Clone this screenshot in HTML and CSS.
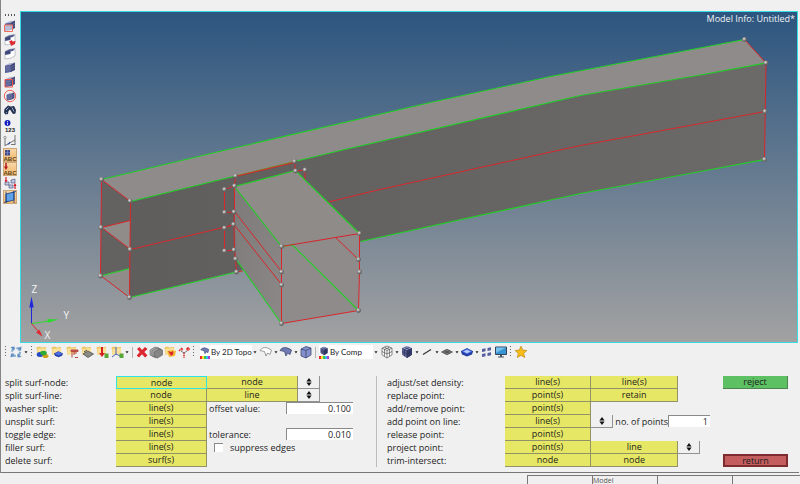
FILE: index.html
```html
<!DOCTYPE html>
<html lang="en">
<head>
<meta charset="utf-8">
<title>Model</title>
<link rel="stylesheet" href="styles.css">
</head>
<body>
<svg class="defs" aria-hidden="true">
  <symbol id="caret" viewBox="0 0 6 14"><path d="M1.5 6.2h3L3 8.4z" fill="#222"/></symbol>
  <symbol id="updown" viewBox="0 0 8 10"><path d="M1.4 4.4 4 1l2.6 3.400zM1.400 5.600h5.200L4 9z" fill="#111"/></symbol>
  <symbol id="solid" viewBox="0 0 14 14">
    <path d="M2 4.500 8 3.500v7.500l-6 1z" fill="#50588e"/><path d="M2 4.500 6 2.500l6-1-4 2z" fill="#a5abcf"/><path d="m8 3.500 4-2V9l-4 2z" fill="#3f4777"/>
    <path d="M4 4.200v7.500M6 3.900v7.400M2 7l6-1 4-2M2 9.500l6-1 4-2" stroke="#8088b8" stroke-width=".5" fill="none"/>
  </symbol>
  <symbol id="halfsolid" viewBox="0 0 14 14">
    <path d="M2 4.500 6 2.500l6-1V9l-4 2-6 1z" fill="#fff" stroke="#9b9da9" stroke-width=".6"/>
    <path d="M2 4.500 6 2.500l6-1-2 2.500-2.500.500V7L2 8z" fill="#555e91"/><path d="M4 4v3.500M6 3.300v3.500M2 6.200l5.500-1" stroke="#252b54" stroke-width=".5"/>
  </symbol>
  <symbol id="folder" viewBox="0 0 14 14"><path d="M1.500 2.200 5 1.400l1.200 1 4.800-.4v6.500l-8.500 1.300z" fill="#efc65d"/><path d="m2.500 3.800 9-.8-.8 5.700-8.200 1z" fill="#fbe19a"/></symbol>
  <symbol id="cube" viewBox="0 0 14 14">
    <path d="m7 1 5 2.200v6.600L7 13 2 9.800V3.200z" fill="#5c6393"/><path d="m7 1 5 2.200-5 2.300-5-2.300z" fill="#9ca4d2"/><path d="M7 5.500 12 3.200v6.600L7 13z" fill="#363c69"/>
    <path d="m2 3.200 5 2.300 5-2.300M7 5.500V13M2 6.500 7 9l5-2.500M4.500 4.300v7M9.500 4.300v7M4.500 2.200l5 2.200M9.500 2.200l-5 2.200" fill="none" stroke="#252b55" stroke-width=".6"/>
  </symbol>
  <symbol id="surface" viewBox="0 0 14 14"><path d="M1 5.500C3 2 7 1.500 12.500 5L11 9.500 8.500 8 7 11 5.500 6.500z" fill="#707bb5" stroke="#343b65" stroke-width=".7"/></symbol>
  <symbol id="slab" viewBox="0 0 14 14"><path d="m1 6.500 6-3 6 3-1 3-5 2-5-2z" fill="#2440a8"/><path d="m1 6.500 6-3 6 3-6 3z" fill="#4d74ec" stroke="#1d3187" stroke-width=".6"/></symbol>
  <symbol id="spectrum" viewBox="0 0 10 3"><path fill="#e8262c" d="M0 0h2v3H0z"/><path fill="#f4e534" d="M2 0h2v3H2z"/><path fill="#38c452" d="M4 0h2v3H4z"/><path fill="#30bff0" d="M6 0h2v3H6z"/><path fill="#a63fd9" d="M8 0h2v3H8z"/></symbol>
</svg>

<main class="app">
  <section class="workspace">
    <nav class="rail" aria-label="Display">
      <span class="rail-grip"></span>
      <button class="tool" aria-label="Mask"><svg viewBox="0 0 14 14"><use href="#solid"/><path d="M1.500 6h8v6.500h-8z" fill="#fff" fill-opacity=".55" stroke="#f06b5c"/></svg></button>
      <button class="tool" aria-label="Reverse"><svg viewBox="0 0 14 14"><use href="#halfsolid"/><path d="M6 8.500 9 7l.5 1.500 3-.5-.5 3-4 2-.5-2z" fill="#dc2b35"/></svg></button>
      <button class="tool" aria-label="Adjacent"><svg><use href="#halfsolid"/></svg></button>
      <button class="tool" aria-label="All"><svg><use href="#solid"/></svg></button>
      <button class="tool" aria-label="Window"><svg viewBox="0 0 14 14"><use href="#solid"/><path d="M2 4.500h7.500V12H2z" fill="none" stroke="#ef5149"/></svg></button>
      <button class="tool" aria-label="Sphere"><svg viewBox="0 0 14 14"><use href="#solid" x="2" y="2" width="11" height="11"/><circle cx="7" cy="7" r="5.700" fill="none" stroke="#ef6258"/></svg></button>
      <button class="tool" aria-label="Find"><svg viewBox="0 0 14 14"><path d="M1.500 6 5 2.500l2.500 1L11 3l2 4-.5 3.500-2.500.5-2-3-1-1.500L5.500 8 5 11l-2.500.5-1.500-2z" fill="#24304f"/><path d="m3 7 2.500-2.500M9 4.500l2 4M3 9.500l1 .5" stroke="#9fb0d4"/></svg></button>
      <button class="tool numbers" aria-label="Numbers"><svg viewBox="0 0 14 9"><circle cx="4.500" cy="5" r="3" fill="#1720bd"/><path d="M4.500 3v1M4.500 4.700v2.300" stroke="#fff" stroke-width=".8"/></svg><span>123</span></button>
      <button class="tool" aria-label="Vector"><svg viewBox="0 0 14 14"><path d="M2 5v7M12 1v10M2 11.500 12 6M8 10.500h4" stroke="#555" stroke-width=".8"/><path d="m4 11 3-3.500V10z" fill="#3b54a5"/><circle cx="2" cy="3.500" r="1.200" fill="none" stroke="#666" stroke-width=".6"/></svg></button>
      <button class="tool active abc" aria-label="Element handles"><svg viewBox="0 0 14 7"><path d="M2 1h5v5.500H2z" fill="#3d478a"/><path d="M4.500 1v6M2 3.700h5" stroke="#8e9bd0" stroke-width=".6"/></svg><span>ABC</span></button>
      <button class="tool active abc" aria-label="Load handles"><svg viewBox="0 0 14 7"><path d="M3 0v4" stroke="#b61620" stroke-width="1.500"/><path d="M1 3.500h4L3 7z" fill="#b61620"/></svg><span>ABC</span></button>
      <button class="tool" aria-label="Connectors"><svg viewBox="0 0 14 14"><path d="M2 6h4v3H2zM8 4l4-1v4H8zM6 9h4v3H6z" fill="#c3c8df" stroke="#505987" stroke-width=".7"/><path d="M3 1v5M12 8v5" stroke="#d4202e" stroke-width="1.200"/><path d="M1.500 4h3L3 6.500zM10.500 10h3L12 7z" fill="#d4202e"/></svg></button>
      <button class="tool active" aria-label="Shaded"><svg viewBox="0 0 14 14"><path d="m3 4 8-2v8l-8 2z" fill="#5fa2ea" stroke="#163e83" stroke-width=".8"/><path d="M3 1.500V13M11 1v12M1 12.500l4-1.300M9 2.500l4-1" stroke="#163e83" stroke-width=".8"/></svg></button>
    </nav>
    <div class="viewport">
      <svg class="model" viewBox="20.5 11.5 776 330" role="img" aria-label="Beam model">
        <defs>
          <linearGradient id="side" x1="0" x2="1"><stop offset="0" stop-color="#605e5d"/><stop offset="1" stop-color="#6c6a68"/></linearGradient>
          <linearGradient id="left" x1="0" x2="1" y2="1"><stop offset="0" stop-color="#7d7b79"/><stop offset="1" stop-color="#8b8887"/></linearGradient>
          <radialGradient id="ball" cx=".4" cy=".35"><stop offset="0" stop-color="#eee"/><stop offset=".4" stop-color="#adabaa"/><stop offset="1" stop-color="#626160"/></radialGradient>
          <circle id="n" r="2.400" fill="url(#ball)"/>
        </defs>
        <path d="m101 179 29 22v96l-30-22z" fill="#646261"/>
        <path d="m101 227 29-7v29zM100 275l29-7v29z" fill="#8f8c8a"/>
        <path d="M101 179 223 150 430 102 550 76 744 39 765.500 62.500 700 74.500 580 95 340 150 130 201z" fill="#8f8b8a"/>
        <path d="M130 201 340 150 580 95 700 74.500 765.500 62.500 764 159 700 171 580 193 360 241 129 297z" fill="url(#side)"/>
        <g fill="none" stroke="#22cf26" stroke-width="1.100">
          <path d="M101 179 223 150 430 102 550 76 744 39M130 201 235 175.500M294 161 340 150 580 95 700 74.500 765.500 62.500M129 297 236 271.500M360 241 580 193 700 171 764 159M100 275.500l29-7.500"/>
        </g>
        <path d="M235 175.500 294 161" stroke="#7c8b20" stroke-width="1.100"/>
        <g fill="none" stroke="#d9262a">
          <path d="m101 179 29 22-1 96-29-22zM130 220l-29 7 29 22 95-22.500 9-2.500M328 201.500 375 190l205-45 120-22 64.500-12M744 39l21.500 23.500L764 159M235 176l59-14M235 175.500l-1 10M294 161l1 9.500 9.500-1V180"/>
          <path d="M234 185.500 224 189v23l10-.5M233 224l-9 3.500v23l9.500-1M236 271.500l6-1"/>
        </g>
        <path d="m234 186 47 60v77l-46-65z" fill="url(#left)"/>
        <path d="m234 186 61-16 64 63-78 13z" fill="#8e8b89"/>
        <path d="m281 246 78-13-1 77-77 13z" fill="#8e8b8a"/>
        <path d="m234 186 61-16 64 63M234 186l47 60M235 258l46 65M281 246l11-1.500 66 65.500" fill="none" stroke="#22cf26" stroke-width="1.100"/>
        <path d="m281 246 78-13v38l-1 39-77 13zM234 186v25l47 60M234 211l-.5 13 47.500 60M233.500 224l.5 25 1 9 1 13.500M335 237l23 22" fill="none" stroke="#d9262a"/>
        <g>
          <use href="#n" x="101" y="179"/><use href="#n" x="129.500" y="200.500"/><use href="#n" x="100.500" y="227"/><use href="#n" x="129.500" y="249"/><use href="#n" x="100" y="275.500"/><use href="#n" x="129" y="297"/>
          <use href="#n" x="744" y="39"/><use href="#n" x="765.500" y="62.500"/><use href="#n" x="764.500" y="111"/><use href="#n" x="764" y="159"/>
          <use href="#n" x="235" y="175.500"/><use href="#n" x="294" y="161"/><use href="#n" x="234" y="185.500"/><use href="#n" x="295" y="170.500"/><use href="#n" x="304.500" y="169.500"/>
          <use href="#n" x="224" y="189"/><use href="#n" x="224" y="212"/><use href="#n" x="224" y="227.500"/><use href="#n" x="224" y="250.500"/>
          <use href="#n" x="233.500" y="211.500"/><use href="#n" x="233" y="224"/><use href="#n" x="233.500" y="249.500"/><use href="#n" x="235" y="258.500"/><use href="#n" x="236" y="271.500"/>
          <use href="#n" x="281" y="246"/><use href="#n" x="281" y="271.500"/><use href="#n" x="281" y="284.500"/><use href="#n" x="281" y="323"/><use href="#n" x="359" y="233"/><use href="#n" x="358" y="259"/><use href="#n" x="359" y="271.500"/><use href="#n" x="358" y="310"/>
        </g>
        <path d="M31 323v-17" stroke="#2028d8"/><path d="m31 296 2.200 11h-4.400z" fill="#2028d8"/>
        <path d="m31 323 18-2.500" stroke="#2bdc2b"/><path d="m58 319-10.500 3.300-.7-3.800z" fill="#2bdc2b"/>
        <path d="m31 323 6 7" stroke="#e2262a"/><path d="m42 336-6.300-4 3-3z" fill="#e2262a"/>
        <g class="axis"><text x="31" y="292">Z</text><text x="63" y="318">Y</text><text x="44" y="338">X</text></g>
      </svg>
      <p class="model-info">Model Info: Untitled*</p>
    </div>
  </section>

  <div class="toolbar">
    <span class="grip"></span>
    <button class="tool" aria-label="Update"><svg viewBox="0 0 14 14"><circle cx="7" cy="7" r="4" fill="none" stroke="#86add3" stroke-width="2" stroke-dasharray="4.800 1.480"/><path d="m1.500 2 4-.5L5 5.500zM12.500 12l-4 .5L9 8.500zM12.500 1.500l-.5 4-3.500-2.500zM1.500 12.500 2 8.500l3.500 2.500z" fill="#5d8cbd"/></svg></button>
    <button class="drop" aria-label="More"><svg><use href="#caret"/></svg></button>
    <span class="grip"></span>
    <div class="group">
      <button class="tool" aria-label="Assembly"><svg viewBox="0 0 14 14"><use href="#folder"/><ellipse cx="5" cy="9.500" rx="3.300" ry="2.500" fill="#2748c6"/><ellipse cx="10.500" cy="11" rx="3" ry="2" fill="#d2a11b"/><ellipse cx="8.500" cy="8" rx="3.300" ry="2.300" fill="#2eaa36"/></svg></button>
      <button class="tool" aria-label="Component"><svg viewBox="0 0 14 14"><use href="#folder"/><use href="#slab" x="3" y="4" width="11" height="10"/></svg></button>
      <button class="tool" aria-label="Property"><svg viewBox="0 0 14 14"><use href="#folder"/><path d="M6 5h7v1.500H6zM7 6v6.500M10 12.500h3M9 6v4M9 8h3" fill="#c2574a" stroke="#b64b42"/></svg></button>
      <button class="tool" aria-label="Material"><svg viewBox="0 0 14 14"><use href="#folder"/><path d="m3 9 5-3 5.500 3L8 12.500z" fill="#8b8b88" stroke="#42423f" stroke-width=".7"/><path d="m4 7 3-2" stroke="#42423f"/></svg></button>
      <button class="tool" aria-label="Load"><svg viewBox="0 0 14 14"><use href="#folder"/><path d="M6 2h2v6h2l-3 4-3-4h2z" fill="#d5201f"/><path d="M9.500 8.500h4V13h-4z" fill="#57a736"/></svg></button>
      <button class="tool" aria-label="System"><svg viewBox="0 0 14 14"><use href="#folder"/><path d="M6 2v7l-4 3M6 9l4 2" stroke="#4662b8" fill="none"/><path d="M9.500 8.500h4V13h-4z" fill="#57a736"/></svg></button>
    </div>
    <button class="drop" aria-label="More"><svg><use href="#caret"/></svg></button>
    <span class="rule"></span>
    <button class="tool" aria-label="Delete"><svg viewBox="0 0 14 14"><path d="m2 4 2.500-2L7 5l3-3 2.500 2L9.300 7l3.200 3.500L10 12.500 7 9.300l-3 3.200-2.300-2L4.800 7z" fill="#dc2630"/></svg></button>
    <button class="tool" aria-label="Organize"><svg viewBox="0 0 14 14"><path d="m1 5 5-3 4 1v6l-5 3-4-2zM3 6l5-3 4 1v6l-5 3-4-2z" fill="#aaa" stroke="#626262" stroke-width=".6"/><path d="m5 7 5-3 3.500 1v5l-5 3L5 11z" fill="#858585" stroke="#5a5a5a" stroke-width=".6"/></svg></button>
    <button class="tool" aria-label="Renumber"><svg viewBox="0 0 14 14"><use href="#folder"/><path d="m4 6 6-1 3 1-1 5-6 1z" fill="#f3be3c"/><path d="m5 6 3 1 2-1 .5 3-2.500 2z" fill="#db2828"/></svg></button>
    <button class="tool" aria-label="Count"><svg viewBox="0 0 14 14"><path d="m2 6 3-3M5 3v3M11 2v4M9 4h4M7 7v6" stroke="#d33" stroke-width="1.500" stroke-dasharray="2 .6"/><path d="m7 8-3-2M7 8l3-2" stroke="#777"/></svg></button>
    <span class="grip"></span>
    <div class="combo">
      <svg class="combo-icon" viewBox="0 0 10 14"><use href="#surface" x="0" y="1" width="10" height="10"/><use href="#spectrum" y="11" width="10" height="3"/></svg>
      <select aria-label="Geometry color"><option>By 2D Topo</option></select>
      <svg class="combo-caret"><use href="#caret"/></svg>
    </div>
    <button class="tool" aria-label="Wireframe surface"><svg viewBox="0 0 14 14"><path d="M1 5.500C3 2 7 1.500 12.500 5L11 9.500 8.500 8 7 11 5.500 6.500z" fill="#fff" stroke="#777" stroke-width=".7"/></svg></button>
    <button class="drop" aria-label="More"><svg><use href="#caret"/></svg></button>
    <button class="tool" aria-label="Shaded surface"><svg><use href="#surface"/></svg></button>
    <button class="drop" aria-label="More"><svg><use href="#caret"/></svg></button>
    <button class="tool" aria-label="Transparent"><svg viewBox="0 0 14 14"><path d="m2 4 5-2.500L12 3v7l-5 3-5-2z" fill="#8490cc" stroke="#343b68" stroke-width=".7"/><path d="m2 4 5 1.500L12 3M7 5.500V13" fill="none" stroke="#343b68" stroke-width=".7"/></svg></button>
    <span class="rule"></span>
    <div class="combo wide">
      <svg class="combo-icon" viewBox="0 0 10 14"><use href="#cube" x="0" y="1" width="10" height="10"/><use href="#spectrum" y="11" width="10" height="3"/></svg>
      <select aria-label="Element color"><option>By Comp</option></select>
      <svg class="combo-caret"><use href="#caret"/></svg>
    </div>
    <button class="tool" aria-label="Wireframe elements"><svg viewBox="0 0 14 14"><path d="m7 1 5 2.200v6.600L7 13 2 9.800V3.200zM2 3.200l5 2.300 5-2.300M7 5.500V13M2 6.500 7 9l5-2.500M4.500 4.300v7M9.500 4.300v7M4.500 2.200l5 2.200M9.500 2.200l-5 2.200" fill="#fff" stroke="#555" stroke-width=".7"/></svg></button>
    <button class="drop" aria-label="More"><svg><use href="#caret"/></svg></button>
    <button class="tool" aria-label="Shaded elements"><svg><use href="#cube"/></svg></button>
    <button class="drop" aria-label="More"><svg><use href="#caret"/></svg></button>
    <button class="tool" aria-label="Line"><svg viewBox="0 0 14 14"><path d="m3 9.500 8-5" stroke="#333" stroke-width="1.200"/></svg></button>
    <button class="drop" aria-label="More"><svg><use href="#caret"/></svg></button>
    <button class="tool" aria-label="Shell"><svg viewBox="0 0 14 14"><path d="m1.500 7 5.500-2.800L12.500 7 7 9.800z" fill="#777" stroke="#333" stroke-width=".6"/><path d="M4 5.500 9.500 8.300M10 5.500 4.500 8.300" stroke="#333" stroke-width=".5"/></svg></button>
    <button class="drop" aria-label="More"><svg><use href="#caret"/></svg></button>
    <button class="tool" aria-label="Solid slab"><svg viewBox="0 0 14 14"><use href="#slab"/><path d="m3.500 6.500 3.500-1.700 3.500 1.700L7 8.200z" fill="#b8c9fb"/></svg></button>
    <button class="drop" aria-label="More"><svg><use href="#caret"/></svg></button>
    <button class="tool" aria-label="Shrink"><svg viewBox="0 0 14 14"><path d="m2 4 3.500-.7v3L2 7zM7.500 3 11 2.300v3l-3.500.7zM2 9l3.500-.7v3L2 12zM7.500 8l3.500-.7v3l-3.500.7z" fill="#535d9f"/></svg></button>
    <button class="tool" aria-label="Display options"><svg viewBox="0 0 14 14"><path d="M1.500 2h11v7.500h-11z" fill="#3793d2" stroke="#34465b"/><path d="M2 2.500h10L2 8z" fill="#76c2ed"/><path d="M6 10h2v1.500h2v1H4v-1h2z" fill="#4b5561"/></svg></button>
    <span class="grip"></span>
    <button class="tool" aria-label="Favorites"><svg viewBox="0 0 14 14"><path d="m7 1.200 1.700 3.900 4.200.4-3.200 2.800 1 4.200L7 10.300l-3.700 2.200 1-4.200L1.100 5.500l4.200-.4z" fill="#f8bd18" stroke="#bf8508" stroke-width=".7"/></svg></button>
  </div>

  <form class="panel">
    <div class="half first">
      <span class="name">split surf-node:</span><button type="button" class="pick focused">node</button><button type="button" class="pick">node</button><button type="button" class="spin" aria-label="Switch"><svg><use href="#updown"/></svg></button>
      <span class="name">split surf-line:</span><button type="button" class="pick">node</button><button type="button" class="pick">line</button><button type="button" class="spin" aria-label="Switch"><svg><use href="#updown"/></svg></button>
      <span class="name">washer split:</span><button type="button" class="pick">line(s)</button><div class="entry"><label for="offset">offset value:</label><input id="offset" type="text" value="0.100"></div>
      <span class="name">unsplit surf:</span><button type="button" class="pick">line(s)</button>
      <span class="name">toggle edge:</span><button type="button" class="pick">line(s)</button><div class="entry"><label for="tol">tolerance:</label><input id="tol" type="text" value="0.010"></div>
      <span class="name">filler surf:</span><button type="button" class="pick">line(s)</button><div class="check"><input id="suppress" type="checkbox"><label for="suppress">suppress edges</label></div>
      <span class="name">delete surf:</span><button type="button" class="pick">surf(s)</button>
    </div>
    <div class="half second">
      <span class="name">adjust/set density:</span><button type="button" class="pick">line(s)</button><button type="button" class="pick">line(s)</button>
      <span class="name">replace point:</span><button type="button" class="pick">point(s)</button><button type="button" class="pick">retain</button>
      <span class="name">add/remove point:</span><button type="button" class="pick">point(s)</button>
      <span class="name">add point on line:</span><button type="button" class="pick">line(s)</button><div class="entry count"><button type="button" class="spin" aria-label="Switch"><svg><use href="#updown"/></svg></button><label for="count">no. of points</label><input id="count" type="text" value="1"></div>
      <span class="name">release point:</span><button type="button" class="pick">point(s)</button>
      <span class="name">project point:</span><button type="button" class="pick">point(s)</button><button type="button" class="pick">line</button><button type="button" class="spin" aria-label="Switch"><svg><use href="#updown"/></svg></button>
      <span class="name">trim-intersect:</span><button type="button" class="pick">node</button><button type="button" class="pick">node</button>
    </div>
    <div class="actions">
      <button type="button" class="pick reject">reject</button>
      <button type="button" class="pick return">return</button>
    </div>
  </form>

  <footer class="status"><span></span><span></span><span>Model</span><span></span><span></span></footer>
</main>
</body>
</html>
```
FILE: styles.css
```css
* { box-sizing: border-box; }

body {
  margin: 0;
  background: #f0f0f0;
  color: #1c1c1c;
  font: 9px/13px "Open Sans", "Noto Sans", sans-serif;
}

button, input, select {
  margin: 0;
  padding: 0;
  border: 0;
  border-radius: 0;
  background: none;
  color: inherit;
  font: inherit;
  appearance: none;
}

svg { display: block; }
.defs { position: absolute; width: 0; height: 0; }

.app {
  display: flex;
  flex-direction: column;
  min-height: 100vh;
  padding-top: 11px;
  background: linear-gradient(#858585, #858585) left top / 1px calc(100% - 11px) no-repeat;
}

/* Drawing area */
.workspace { display: flex; flex: 1; padding: 0 2px; }

.rail {
  display: flex;
  flex-direction: column;
  align-items: center;
  width: 18px;
  flex: none;
  padding: 3px 2px 0 0;
}
.rail-grip { width: 11px; height: 2px; margin-bottom: 3px; background: repeating-linear-gradient(90deg, #555 0 1px, transparent 1px 3px); }

.tool { width: 14px; height: 14px; flex: none; }
.tool svg { width: 14px; height: 14px; }
.rail .tool svg { margin: auto; }
.tool.active { background: linear-gradient(#f9d9ab, #f2b566); box-shadow: inset 0 0 0 1px #cda876; }
.tool.numbers, .tool.abc { font: bold 6px/6px "Liberation Sans", sans-serif; }
.tool.numbers { height: 17px; }
.tool.numbers span { display: block; }
.tool.numbers svg { height: 9px; }
.tool.abc svg { height: 7px; }
.tool.abc span { display: block; color: #5a4323; }

.viewport {
  position: relative;
  flex: 1;
  min-width: 0;
  border: 1px solid #36dce2;
  background: linear-gradient(#2c557f, #a2a2a2);
}
.model { width: 100%; height: 100%; }
.axis { fill: #f4f4f4; font-size: 10px; }
.model-info { position: absolute; top: 0; right: 2px; margin: 0; color: #f4f4f4; }

/* Icon toolbar */
.toolbar { display: flex; align-items: center; height: 20px; padding: 0 0 2px 3px; }
.group { display: flex; gap: 1px; }
.drop, .drop svg { width: 6px; height: 14px; }
.grip { width: 2px; height: 12px; margin: 0 2px; flex: none; background: repeating-linear-gradient(#666 0 1px, transparent 1px 3px) left / 1px 100% no-repeat; }
.rule { width: 1px; height: 11px; margin: 0 2px; background: #b4b4b4; }
.combo { display: flex; align-items: center; width: 58px; height: 14px; margin: 0 1px 0 3px; background: #fff; }
.combo.wide { width: 60px; margin-left: 1px; }
.combo-icon { width: 10px; height: 14px; flex: none; }
.combo select { flex: 1; min-width: 0; height: 14px; padding-left: 1px; font: 8px/14px Lato, sans-serif; }
.combo-caret { width: 6px; height: 14px; flex: none; background: #f0f0f0; }

/* Command panel */
.panel {
  display: grid;
  grid-template-columns: 376fr 333fr 89fr;
  margin: 13px 1px 0;
  padding-bottom: 5px;
  border-bottom: 1px solid #777;
}
.half { display: grid; grid-auto-rows: 13px; }
.first { grid-template-columns: 111fr 91fr 91fr 22fr 33fr; padding: 0 23px 0 4px; border-right: 1px solid #bbb; }
.second { grid-template-columns: 118fr 87fr 87fr 22fr 10fr; padding-left: 10px; }
.name { grid-column: 1; white-space: nowrap; }

.pick {
  height: 13px;
  border: solid #929268;
  border-width: 0 1px 1px 0;
  background: #e6e764;
  line-height: 12px;
  text-align: center;
}
.pick.focused { border: 1px solid #30e2e2; line-height: 11px; }

.spin {
  display: flex;
  align-items: center;
  justify-content: center;
  height: 13px;
  border: solid #929292;
  border-width: 0 1px 1px 0;
}
.spin svg { width: 8px; height: 10px; }

.entry { display: flex; grid-column: 3 / -1; padding-left: 2px; white-space: nowrap; }
.entry input {
  width: 67px;
  height: 12px;
  margin-left: auto;
  padding-right: 2px;
  border: solid #8a8a8a;
  border-width: 1px 0 0 1px;
  background: #fff;
  text-align: right;
}
.entry.count { padding-left: 0; }
.entry.count .spin { width: 22px; margin-right: 2px; }
.entry.count input { width: 42px; }

.check { display: flex; grid-column: 3 / -1; align-items: center; gap: 7px; padding-left: 7px; }
.check input { width: 9px; height: 9px; border: solid #8a8a8a; border-width: 1px 0 0 1px; background: #fff; }

.actions { display: flex; flex-direction: column; justify-content: space-between; padding: 0 11px 0 13px; }
.reject { border-color: #4c8550; background: #5dc062; }
.return { border: 2px solid #7e2c2f; background: #c45e5e; line-height: 9px; }

/* Status bar */
.status { display: grid; grid-template-columns: 527fr 65fr 65fr 75fr 68fr; height: 9px; margin-top: 2px; overflow: hidden; }
.status span { border: solid #777; border-width: 1px 0 0 1px; color: #555; font-size: 7px; line-height: 10px; }
.status span:first-child { border: 0; }
```
